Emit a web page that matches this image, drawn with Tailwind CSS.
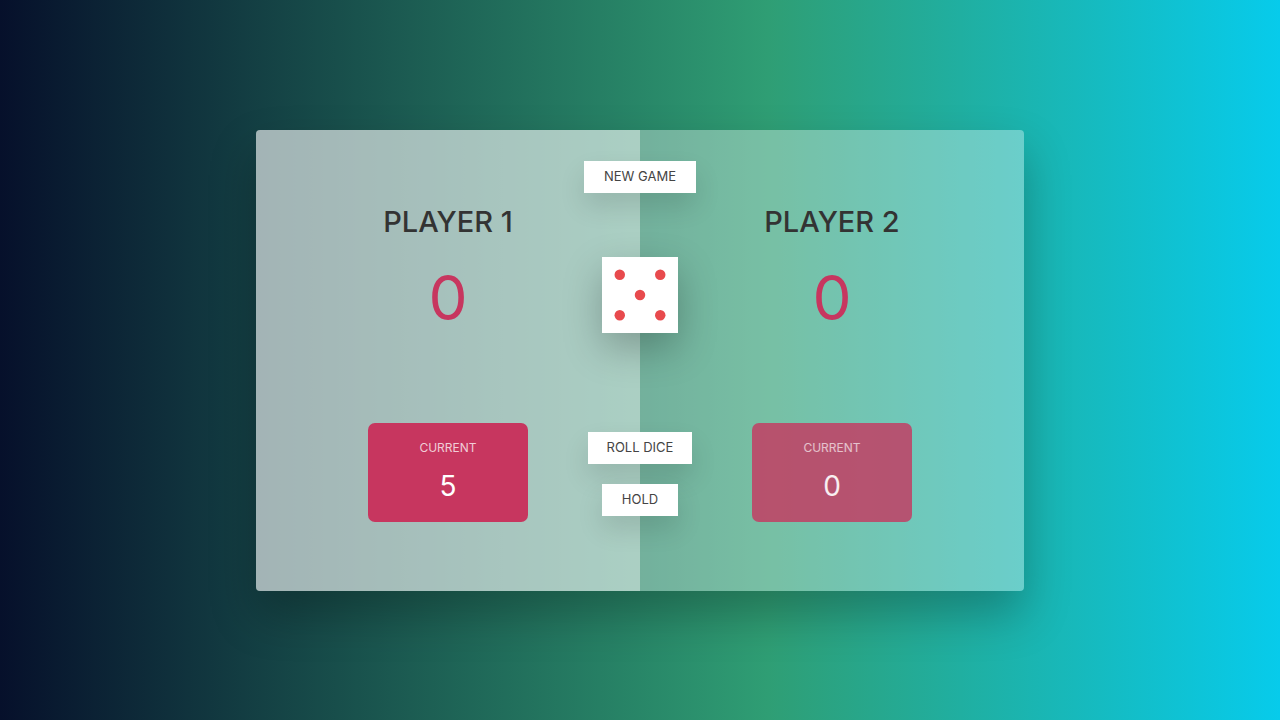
<!DOCTYPE html>
<html lang="en">
<head>
  <meta charset="UTF-8" />
  <meta name="viewport" content="width=device-width, initial-scale=1.0" />
  <title>Pig Game</title>
  <script src="https://cdn.jsdelivr.net/npm/@tailwindcss/browser@4"></script>
</head>
<body class="min-h-screen flex items-center justify-center bg-linear-to-r/srgb from-[#06102b] via-[#2f9e74] via-60% to-[#07cbeb] font-['Inter','Liberation_Sans',sans-serif] text-[#333]">

  <main class="relative flex w-3/5 min-h-[461px] rounded-[4px] bg-white/35 shadow-[0_23px_46px_rgba(0,0,0,0.25)]">

    <!-- Player 1 (active) -->
    <section class="flex-1 flex flex-col items-center py-[69px] rounded-l-[4px] bg-white/40">
      <h2 class="text-[29px] leading-[46px] font-medium">PLAYER 1</h2>
      <p id="score--0" class="mt-5 text-[62px] leading-[66px] text-[#c7365f]">0</p>
      <div class="mt-auto w-40 pt-[15px] pb-4 rounded-[7px] bg-[#c7365f] text-white text-center">
        <p class="text-[12px] leading-5 text-white/75">CURRENT</p>
        <p id="current--0" class="mt-2 text-[28px] leading-10">5</p>
      </div>
    </section>

    <!-- Player 2 -->
    <section class="flex-1 flex flex-col items-center py-[69px] rounded-r-[4px]">
      <h2 class="text-[29px] leading-[46px] font-medium">PLAYER 2</h2>
      <p id="score--1" class="mt-5 text-[62px] leading-[66px] text-[#c7365f]">0</p>
      <div class="mt-auto w-40 pt-[15px] pb-4 rounded-[7px] bg-[#c7365f]/80 text-white/90 text-center">
        <p class="text-[12px] leading-5 text-white/65">CURRENT</p>
        <p id="current--1" class="mt-2 text-[28px] leading-10">0</p>
      </div>
    </section>

    <!-- Controls over the seam -->
    <div class="absolute inset-0 mx-auto w-28 flex flex-col items-center pt-[31px]">
      <button class="w-28 h-8 bg-white text-[13px] text-[#444] shadow-[0_13px_27px_rgba(0,0,0,0.12)] cursor-pointer">NEW GAME</button>
      <svg class="mt-16 size-[76px] bg-white shadow-[0_15px_38px_rgba(0,0,0,0.25)]" viewBox="0 0 77 77" fill="#e84a4d" role="img" aria-label="Dice showing 5">
        <circle cx="18" cy="18" r="5.3" />
        <circle cx="59" cy="18" r="5.3" />
        <circle cx="38.5" cy="38.5" r="5.3" />
        <circle cx="18" cy="59" r="5.3" />
        <circle cx="59" cy="59" r="5.3" />
      </svg>
      <button class="mt-[99px] w-[104px] h-8 bg-white text-[13px] text-[#444] shadow-[0_13px_27px_rgba(0,0,0,0.12)] cursor-pointer">ROLL DICE</button>
      <button class="mt-5 w-[76px] h-8 bg-white text-[13px] text-[#444] shadow-[0_13px_27px_rgba(0,0,0,0.12)] cursor-pointer">HOLD</button>
    </div>
  </main>

</body>
</html>
